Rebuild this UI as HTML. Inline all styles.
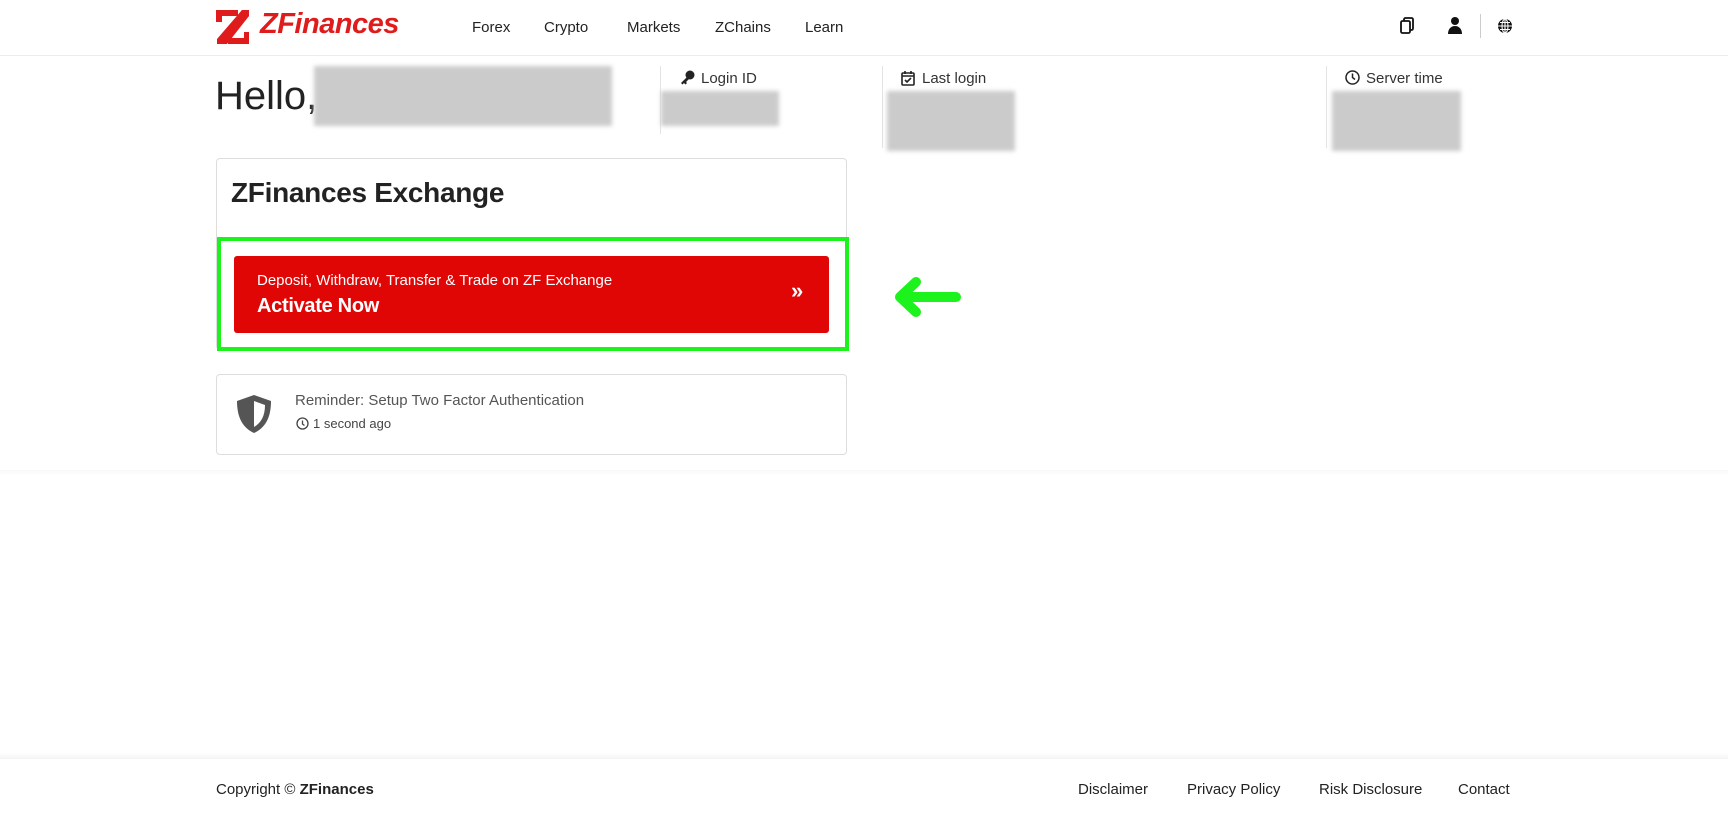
<!DOCTYPE html>
<html><head><meta charset="utf-8"><style>
*{margin:0;padding:0;box-sizing:border-box}
body{width:1728px;height:829px;background:#fff;font-family:"Liberation Sans",sans-serif;color:#222;position:relative;overflow:hidden}
.a{position:absolute;white-space:nowrap}
.nav{font-size:15px;top:19px;color:#222}
.blur{position:absolute;background:#cbcbcb;filter:blur(2px)}
.vd{position:absolute;width:1px;background:#e3e3e3}
.lab{font-size:15px;top:70px;color:#333}
.ft{font-size:15px;top:781px;color:#222}
</style></head><body>
<div class="a" style="left:0;top:55px;width:1728px;height:1px;background:#ececec"></div>
<!-- logo -->
<svg class="a" style="left:215px;top:9px" width="36" height="36" viewBox="0 0 36 36"><path d="M1 1h22v6H7v6H1z M27 1h7v6L12 35H2v-3z M13 29h16v-6h5v12H13z" fill="#e01b1b"/><path d="M34 1v6L8 35H2v-5L27 1z" fill="#e01b1b"/></svg>
<div class="a" style="left:260px;top:8px;font-size:29px;font-weight:bold;font-style:italic;color:#e01b1b;letter-spacing:-0.5px">ZFinances</div>
<div class="a nav" style="left:472px">Forex</div>
<div class="a nav" style="left:544px">Crypto</div>
<div class="a nav" style="left:627px">Markets</div>
<div class="a nav" style="left:715px">ZChains</div>
<div class="a nav" style="left:805px">Learn</div>
<svg class="a" style="left:1399px;top:17px" width="16" height="18" viewBox="0 0 16 18"><rect x="5" y="1" width="9" height="12" rx="1.5" fill="none" stroke="#111" stroke-width="1.8"/><rect x="2" y="4" width="9" height="12" rx="1.5" fill="#fff" stroke="#111" stroke-width="1.8"/></svg>
<svg class="a" style="left:1447px;top:16px" width="16" height="18" viewBox="0 0 16 18"><circle cx="8" cy="5" r="4" fill="#111"/><path d="M1 18c0-5 3-8 7-8s7 3 7 8z" fill="#111"/></svg>
<div class="a" style="left:1480px;top:14px;width:1px;height:24px;background:#ccc"></div>
<svg class="a" style="left:1497px;top:18px" width="16" height="16" viewBox="0 0 16 16"><circle cx="8" cy="8" r="7" fill="#111"/><path d="M1 8h14M8 1v14M3 4.5h10M3 11.5h10" stroke="#fff" stroke-width="1.1"/><ellipse cx="8" cy="8" rx="3" ry="7" fill="none" stroke="#fff" stroke-width="1.1"/></svg>
<!-- hello -->
<div class="a" style="left:215px;top:74px;font-size:40px;color:#222">Hello,</div>
<div class="blur" style="left:314px;top:66px;width:298px;height:60px"></div>
<div class="vd" style="left:660px;top:66px;height:68px"></div>
<svg class="a" style="left:680px;top:70px" width="15" height="15" viewBox="0 0 15 15"><circle cx="10" cy="5" r="4.5" fill="#222"/><path d="M7 7L1 13l1.5 1.5L4 13l1.5 1.5L7 13l-1-1 3-3z" fill="#222"/></svg>
<div class="a lab" style="left:701px">Login ID</div>
<div class="blur" style="left:661px;top:91px;width:118px;height:35px"></div>
<div class="vd" style="left:882px;top:66px;height:82px"></div>
<svg class="a" style="left:901px;top:70px" width="14" height="16" viewBox="0 0 14 16"><rect x="1" y="3" width="12" height="12" rx="1" fill="none" stroke="#222" stroke-width="1.6"/><path d="M4 1v3M10 1v3M1 6h12M4 10l2 2 4-4" stroke="#222" stroke-width="1.6" fill="none"/></svg>
<div class="a lab" style="left:922px">Last login</div>
<div class="blur" style="left:887px;top:91px;width:128px;height:60px"></div>
<div class="vd" style="left:1326px;top:66px;height:82px"></div>
<svg class="a" style="left:1345px;top:70px" width="15" height="15" viewBox="0 0 15 15"><circle cx="7.5" cy="7.5" r="6.5" fill="none" stroke="#222" stroke-width="1.5"/><path d="M7.5 3.5v4l2.5 2" stroke="#222" stroke-width="1.5" fill="none"/></svg>
<div class="a lab" style="left:1366px">Server time</div>
<div class="blur" style="left:1332px;top:91px;width:129px;height:60px"></div>
<!-- exchange card -->
<div class="a" style="left:216px;top:158px;width:631px;height:192px;border:1px solid #ddd;border-radius:4px"></div>
<div class="a" style="left:231px;top:177px;font-size:28px;font-weight:bold;color:#222;letter-spacing:-0.3px">ZFinances Exchange</div>
<div class="a" style="left:217px;top:237px;width:632px;height:114px;border:4px solid #1cf21c"></div>
<div class="a" style="left:234px;top:256px;width:595px;height:77px;background:#e00606;border-radius:3px"></div>
<div class="a" style="left:257px;top:272px;font-size:15px;color:#fff">Deposit, Withdraw, Transfer &amp; Trade on ZF Exchange</div>
<div class="a" style="left:257px;top:295px;font-size:20px;font-weight:bold;color:#fff;letter-spacing:-0.3px">Activate Now</div>
<div class="a" style="left:791px;top:280px;font-size:22px;font-weight:bold;color:#fff;line-height:22px">»</div>
<svg class="a" style="left:890px;top:272px" width="76" height="50" viewBox="0 0 76 50"><path d="M66 25H12M26 10L10 25l16 15" stroke="#1cf21c" stroke-width="10" fill="none" stroke-linecap="round" stroke-linejoin="round"/></svg>
<!-- reminder -->
<div class="a" style="left:216px;top:374px;width:631px;height:81px;border:1px solid #ddd;border-radius:4px"></div>
<svg class="a" style="left:234px;top:393px" width="40" height="42" viewBox="0 0 40 42"><path d="M20 2L37 8c0 17-6 27-17 32C9 35 3 25 3 8z" fill="#555"/><path d="M20 8l11 4c0 11-4 18-11 22z" fill="#fff"/></svg>
<div class="a" style="left:295px;top:392px;font-size:15px;color:#555">Reminder: Setup Two Factor Authentication</div>
<svg class="a" style="left:296px;top:417px" width="13" height="13" viewBox="0 0 13 13"><circle cx="6.5" cy="6.5" r="5.5" fill="none" stroke="#444" stroke-width="1.3"/><path d="M6.5 3.5v3.5l2 1.5" stroke="#444" stroke-width="1.3" fill="none"/></svg>
<div class="a" style="left:313px;top:416px;font-size:13px;color:#444">1 second ago</div>
<div class="a" style="left:0;top:470px;width:1728px;height:5px;background:linear-gradient(#f7f7f7,#fff)"></div>
<!-- footer -->
<div class="a" style="left:0;top:753px;width:1728px;height:6px;background:linear-gradient(#fff,#f4f4f4)"></div>
<div class="a ft" style="left:216px">Copyright © <b>ZFinances</b></div>
<div class="a ft" style="left:1078px">Disclaimer</div>
<div class="a ft" style="left:1187px">Privacy Policy</div>
<div class="a ft" style="left:1319px">Risk Disclosure</div>
<div class="a ft" style="left:1458px">Contact</div>
</body></html>
